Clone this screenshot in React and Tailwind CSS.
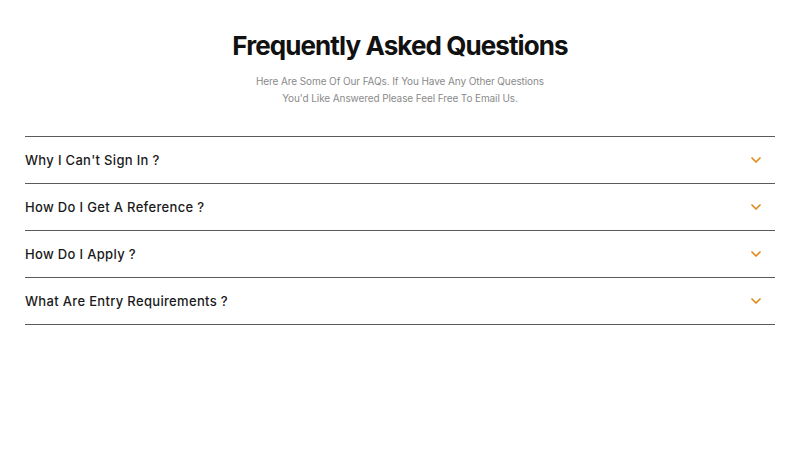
import React, { useState } from 'react';
import { ChevronDown } from 'lucide-react';

const faqs = [
  { q: "Why I Can't Sign In ?", a: 'Make sure your email is verified and your password is correct.' },
  { q: 'How Do I Get A Reference ?', a: 'Contact your previous employer or teacher for a reference letter.' },
  { q: 'How Do I Apply ?', a: 'Fill in the application form and submit it before the deadline.' },
  { q: 'What Are Entry Requirements ?', a: 'Entry requirements vary by course; check the course page.' },
];

const App = () => {
  const [open, setOpen] = useState(null);

  return (
    <div className="min-h-screen bg-white px-[25px] pt-[29px]" style={{ fontFamily: 'Inter, Roboto, "Liberation Sans", sans-serif' }}>
      <h1 className="text-center text-[26px] leading-[34px] font-bold tracking-[-0.035em] text-[#111]">
        Frequently Asked Questions
      </h1>
      <p className="mt-[10px] text-center text-[10px] leading-[17px] tracking-[-0.01em] text-[#8a8a8a]">
        Here Are Some Of Our FAQs. If You Have Any Other Questions
        <br />
        You'd Like Answered Please Feel Free To Email Us.
      </p>

      <div className="mt-[29px] border-t border-[#5a5a5a]">
        {faqs.map((f, i) => (
          <div key={f.q} className="border-b border-[#5a5a5a]">
            <button
              type="button"
              onClick={() => setOpen(open === i ? null : i)}
              className="w-full h-[46px] flex items-center justify-between text-left"
            >
              <span className="pt-[2px] text-[13px] font-medium tracking-[0.025em] text-[#1a1a1a]">{f.q}</span>
              <ChevronDown className={`h-[16px] w-[16px] mr-[11px] text-[#e08a1e] transition-transform ${open === i ? 'rotate-180' : ''}`} strokeWidth={2.6} />
            </button>
            {open === i && <p className="pb-4 text-sm text-gray-500">{f.a}</p>}
          </div>
        ))}
      </div>
    </div>
  );
};

export default App;
